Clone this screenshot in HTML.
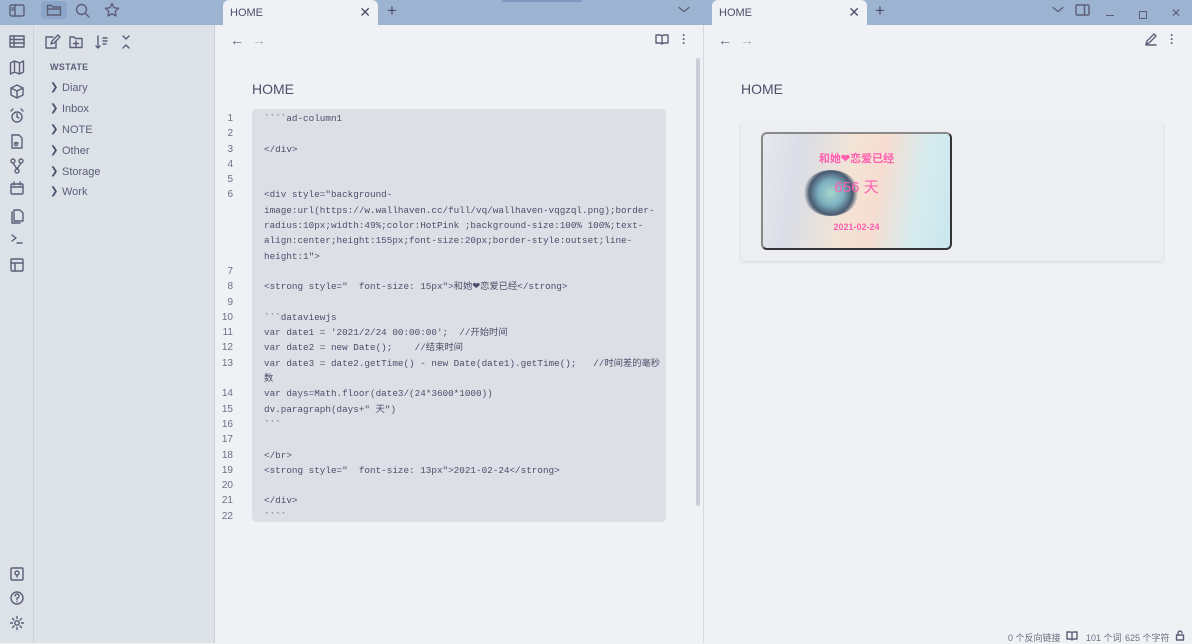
<!DOCTYPE html>
<html><head><meta charset="utf-8"><style>
*{box-sizing:border-box;margin:0;padding:0}
body{width:1192px;height:643px;overflow:hidden;background:#eff1f5;font-family:"Liberation Sans","Noto Sans CJK SC",sans-serif;position:relative;color:#4c4f69}
.abs{position:absolute}
svg{fill:none;stroke:#5c5f77;stroke-width:1.4;stroke-linecap:round;stroke-linejoin:round}
.top{left:0;top:0;width:1192px;height:25px;background:#9cb4d2}
.tab{background:#eff1f5;height:25px;border-radius:6px 6px 0 0;font-size:11px;color:#4c4f69;padding:7px 0 0 7px}
.rib{left:0;top:25px;width:34px;height:618px;background:#dde1e8;border-right:1px solid #cfd3dc}
.fp{left:34px;top:25px;width:181px;height:618px;background:#dde1e8;border-right:1px solid #ccd0d9}
.fi{font-size:11px;color:#5c5f77;left:62px}
.chev{left:50px;font-size:10px;color:#4c4f69}
.code{left:252px;top:109px;width:414px;height:413px;background:#dcdfe6;border-radius:4px}
.ln{font-family:"Liberation Sans",sans-serif;font-size:10px;color:#6c6f85;left:220px;width:13px;text-align:right}
.ct{font-family:"Liberation Mono","Noto Sans CJK SC",monospace;font-size:9.3px;color:#4c4f69;left:264px;line-height:15.3px;white-space:pre;top:111px}
.ft{font-size:9px;color:#6c6f85;white-space:nowrap;top:631px}
</style></head><body>
<div class="abs top"></div>
<div class="abs" style="left:41px;top:1px;width:26px;height:18px;background:#8ba6c8;border-radius:4px"></div>
<svg class="abs" style="left:9px;top:4px" width="16" height="14"><rect x="1" y="1" width="14" height="11" rx="1.5"/><path d="M6 1v11M3 4h1.5M3 6h1.5"/></svg>
<svg class="abs" style="left:46px;top:3px" width="16" height="14"><path d="M1.5 2.5h4l1.5 1.5h7.5v8h-13z M1.5 6h13"/></svg>
<svg class="abs" style="left:75px;top:3px" width="16" height="16"><circle cx="6.5" cy="6.5" r="5"/><path d="M10 10l4 4"/></svg>
<svg class="abs" style="left:104px;top:2px" width="16" height="16"><path d="M8 1.5l2 4.2 4.5.6-3.3 3.1.8 4.5L8 11.7 4 13.9l.8-4.5L1.5 6.3 6 5.7z"/></svg>
<div class="abs tab" style="left:223px;top:0;width:155px">HOME<span class="abs" style="right:7px;top:4px;font-size:14px">✕</span></div>
<div class="abs" style="left:387px;top:1px;font-size:17px;color:#4c4f69">+</div>
<div class="abs" style="left:502px;top:0;width:80px;height:2px;background:#7d99c0"></div>
<svg class="abs" style="left:678px;top:6px" width="12" height="8"><path d="M1 1.5l5 4 5-4"/></svg>
<div class="abs tab" style="left:712px;top:0;width:155px">HOME<span class="abs" style="right:7px;top:4px;font-size:14px">✕</span></div>
<div class="abs" style="left:875px;top:1px;font-size:17px;color:#4c4f69">+</div>
<svg class="abs" style="left:1052px;top:6px" width="12" height="8"><path d="M1 1.5l5 4 5-4"/></svg>
<svg class="abs" style="left:1075px;top:4px" width="16" height="14"><rect x="1" y="1" width="13" height="10" rx="1"/><path d="M9.5 1v10"/></svg>
<div class="abs" style="left:1106px;top:15px;width:8px;height:1px;background:#5c5f77"></div>
<div class="abs" style="left:1139px;top:11px;width:8px;height:8px;border:1px solid #5c5f77"></div>
<div class="abs" style="left:1171px;top:6px;font-size:12px;color:#5c5f77">✕</div>

<div class="abs rib"></div>
<svg class="abs" style="left:9px;top:35px" width="16" height="160">
<rect x="1" y="1" width="14" height="11"/><path d="M1 4.5h14M1 8h14M5 1v11"/>
<path d="M1.5 28l4-2 5 2 4-2v11l-4 2-5-2-4 2zM5.5 26v11M10.5 28v11"/>
<path d="M8 50l6 3v7l-6 3-6-3v-7zM2 53l6 3 6-3M8 56v7"/>
<circle cx="8" cy="82" r="5"/><path d="M8 79v3l2 1M2 76l2-2M14 76l-2-2"/>
<path d="M3 100h7l3 3v10H3z M6 108h3"/><circle cx="7" cy="109" r="1.6"/>
<circle cx="4" cy="126" r="2"/><circle cx="12" cy="126" r="2"/><circle cx="8" cy="136" r="2"/><path d="M4 128l4 6M12 128l-4 6"/>
<rect x="2" y="149" width="12" height="10" rx="1"/><path d="M2 152h12M5 147v3M11 147v3"/>
</svg>
<svg class="abs" style="left:9px;top:208px" width="16" height="70">
<path d="M5 2h6l3 3v8H5zM3 4v11h8"/>
<path d="M3 27l4 3-4 3M8 35h5"/>
<rect x="2" y="51" width="12" height="12" rx="1"/><path d="M2 55h12M6 55v8"/>
</svg>
<svg class="abs" style="left:9px;top:566px" width="16" height="66">
<rect x="2" y="2" width="12" height="12" rx="1"/><circle cx="8" cy="7" r="2"/><path d="M8 9v2"/>
<circle cx="8" cy="32" r="6"/><path d="M6 30a2 2 0 1 1 2 2v1.5M8 35.5v.2"/>
<circle cx="8" cy="57" r="2.2"/><path d="M8 50.5v2M8 61.5v2M1.5 57h2M12.5 57h2M3.5 52.5l1.4 1.4M11 60l1.5 1.5M3.5 61.5L5 60M11 54l1.5-1.5"/>
</svg>

<div class="abs fp"></div>
<svg class="abs" style="left:44px;top:34px" width="95" height="16">
<path d="M12 7v7H2V3h7M7 10l1-3 6-6 2 2-6 6z"/>
<path d="M26 3h4l1.5 1.5H38v9H26zM32 7v5M29.5 9.5h5"/>
<path d="M54 2v12l-2-2M54 14l2-2M59 4h4M59 7h4M59 10h3"/>
<path d="M79 2l3 3 3-3M79 14l3-3 3 3"/>
</svg>
<div class="abs" style="left:50px;top:62px;font-size:9px;font-weight:bold;color:#5c5f77;letter-spacing:.3px">WSTATE</div>
<div class="abs chev" style="top:82px">❯</div><div class="abs fi" style="top:82px">Diary</div>
<div class="abs chev" style="top:103px">❯</div><div class="abs fi" style="top:103px">Inbox</div>
<div class="abs chev" style="top:124px">❯</div><div class="abs fi" style="top:124px">NOTE</div>
<div class="abs chev" style="top:145px">❯</div><div class="abs fi" style="top:145px">Other</div>
<div class="abs chev" style="top:166px">❯</div><div class="abs fi" style="top:166px">Storage</div>
<div class="abs chev" style="top:186px">❯</div><div class="abs fi" style="top:186px">Work</div>

<div class="abs" style="left:230px;top:32px;font-size:14px;color:#5c5f77">←</div>
<div class="abs" style="left:252px;top:32px;font-size:14px;color:#acb0be">→</div>
<svg class="abs" style="left:655px;top:33px" width="14" height="12"><path d="M1 2h4.5l1.5 1v8L5.5 10H1zM13 2H8.5L7 3v8l1.5-1H13z"/></svg>
<div class="abs" style="left:682px;top:33px;font-size:12px;font-weight:bold;color:#5c5f77;line-height:4px">·<br>·<br>·</div>
<div class="abs" style="left:252px;top:81px;font-size:14px;color:#4c4f69">HOME</div>
<div class="abs" style="left:696px;top:58px;width:4px;height:448px;background:#c8ccd6;border-radius:2px"></div>
<div class="abs" style="left:703px;top:25px;width:1px;height:618px;background:#d4d7de"></div>
<div class="abs code"></div>
<div class="abs ln" style="top:111px;line-height:15.3px;white-space:pre">1
2
3
4
5
6



 
7
8
9
10
11
12
13

14
15
16
17
18
19
20
21
22</div>
<div class="abs ct">&#96;&#96;&#96;&#96;ad-column1

&lt;/div&gt;


&lt;div style="background-
image:url(https://w.wallhaven.cc/full/vq/wallhaven-vqgzql.png);border-
radius:10px;width:49%;color:HotPink ;background-size:100% 100%;text-
align:center;height:155px;font-size:20px;border-style:outset;line-
height:1"&gt;

&lt;strong style="  font-size: 15px"&gt;和她❤恋爱已经&lt;/strong&gt;

&#96;&#96;&#96;dataviewjs
var date1 = '2021/2/24 00:00:00';  //开始时间
var date2 = new Date();    //结束时间
var date3 = date2.getTime() - new Date(date1).getTime();   //时间差的毫秒
数
var days=Math.floor(date3/(24*3600*1000))
dv.paragraph(days+" 天")
&#96;&#96;&#96;

&lt;/br&gt;
&lt;strong style="  font-size: 13px"&gt;2021-02-24&lt;/strong&gt;

&lt;/div&gt;
&#96;&#96;&#96;&#96;</div>

<div class="abs" style="left:718px;top:32px;font-size:14px;color:#5c5f77">←</div>
<div class="abs" style="left:740px;top:32px;font-size:14px;color:#acb0be">→</div>
<svg class="abs" style="left:1144px;top:33px" width="14" height="13"><path d="M2 11l1-3 7-7 2 2-7 7zM2 12h10"/></svg>
<div class="abs" style="left:1170px;top:33px;font-size:12px;font-weight:bold;color:#5c5f77;line-height:4px">·<br>·<br>·</div>
<div class="abs" style="left:741px;top:81px;font-size:14px;color:#4c4f69">HOME</div>
<div class="abs" style="left:741px;top:122px;width:422px;height:139px;background:#eceef2;border-radius:3px;box-shadow:0 1px 3px rgba(0,0,0,.12)"></div>
<div class="abs" style="left:761px;top:132px;width:191px;height:118px;border-radius:6px;border:2px outset #888;overflow:hidden;background:linear-gradient(100deg,#e6e8ee 0%,#d9dde6 20%,#f3e4d6 45%,#f6ddd0 60%,#d8ecef 80%,#c8e6ee 100%);text-align:center;color:#ff5fb0">
<div class="abs" style="left:40px;top:36px;width:56px;height:46px;border-radius:50%;background:radial-gradient(circle,#a9d6cc 0%,#7cb0c0 35%,#4a5a70 60%,rgba(80,90,110,0) 75%)"></div>
<div class="abs" style="left:0;right:0;top:16px;font-size:11px;font-weight:bold">和她❤恋爱已经</div>
<div class="abs" style="left:0;right:0;top:42px;font-size:15px">656 天</div>
<div class="abs" style="left:0;right:0;top:88px;font-size:9px;font-weight:bold">2021-02-24</div>
</div>
<div class="abs ft" style="left:1008px">0 个反向链接</div>
<svg class="abs" style="left:1066px;top:631px" width="12" height="10"><path d="M1 1h4l1 1v7L5 8H1zM11 1H7L6 2v7l1-1h4z"/></svg>
<div class="abs ft" style="left:1086px">101 个词</div>
<div class="abs ft" style="left:1125px">625 个字符</div>
<svg class="abs" style="left:1175px;top:630px" width="10" height="11"><path d="M3 5V3a2 2 0 0 1 4 0M1.5 5h7v5h-7z"/></svg>
</body></html>
